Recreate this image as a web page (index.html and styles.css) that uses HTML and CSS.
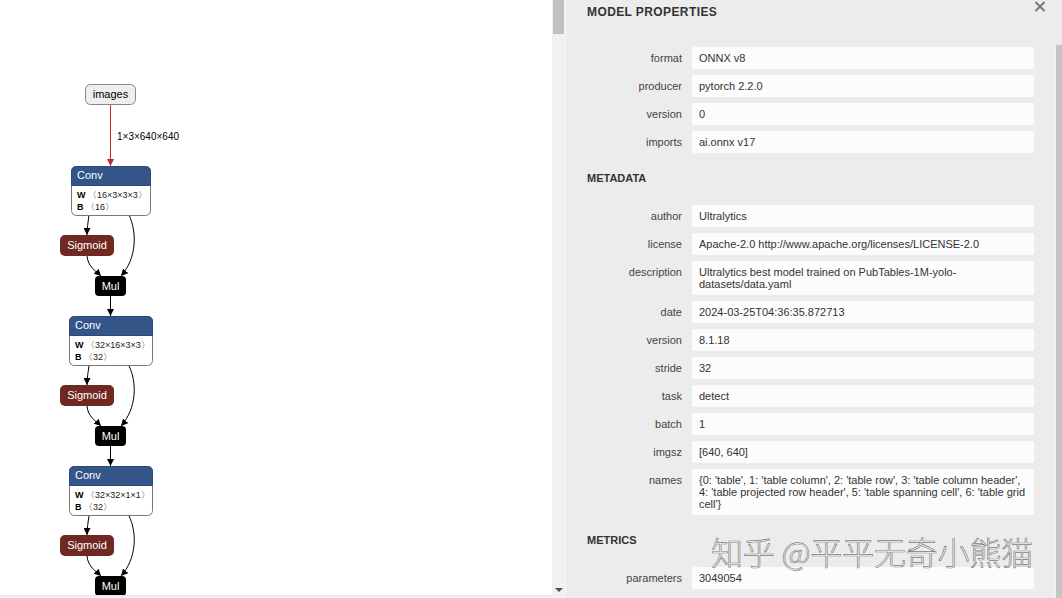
FILE: index.html
```html
<!DOCTYPE html>
<html>
<head>
<meta charset="utf-8">
<link rel="stylesheet" href="styles.css">
</head>
<body>
<div class="app">
  <main class="canvas">
    <svg class="graph" width="552" height="598" viewBox="0 0 552 598" xmlns="http://www.w3.org/2000/svg">
      <defs>
        <marker id="arrow" viewBox="0 0 8 8" refX="8" refY="4" markerWidth="7" markerHeight="7" markerUnits="userSpaceOnUse" orient="auto">
          <path d="M0,0 L8,4 L0,8 Z" fill="#000"/>
        </marker>
        <marker id="arrow-red" viewBox="0 0 8 8" refX="8" refY="4" markerWidth="7" markerHeight="7" markerUnits="userSpaceOnUse" orient="auto">
          <path d="M0,0 L8,4 L0,8 Z" fill="#c0282a"/>
        </marker>
      </defs>

      <!-- input -->
      <rect x="85.5" y="84.5" width="50" height="20" rx="5" class="input-node"/>
      <text x="110.5" y="98" class="node-title dark" text-anchor="middle">images</text>
      <path d="M110.5,105 L110.5,166" class="edge-red" marker-end="url(#arrow-red)"/>
      <text x="117" y="140" class="edge-label">1×3×640×640</text>

      <!-- block 1 -->
      <g>
        <path d="M89,215 C88,223 87,228 87,235" class="edge" marker-end="url(#arrow)"/>
        <path d="M129,215 C137,232 137,258 121,276" class="edge" marker-end="url(#arrow)"/>
        <path d="M87,256 C88,267 96,271 101,276" class="edge" marker-end="url(#arrow)"/>
        <path d="M110.5,296 L110.5,316" class="edge" marker-end="url(#arrow)"/>
        <rect x="71.5" y="166.5" width="79" height="49" rx="5" class="node-body"/>
        <path d="M71.5,185.5 L71.5,171.5 Q71.5,166.5 76.5,166.5 L145.5,166.5 Q150.5,166.5 150.5,171.5 L150.5,185.5 Z" class="layer-head"/>
        <text x="77" y="179" class="node-title">Conv</text>
        <text x="77" y="198" class="attr"><tspan class="attr-name">W</tspan> 〈16×3×3×3〉</text>
        <text x="77" y="210" class="attr"><tspan class="attr-name">B</tspan> 〈16〉</text>
        <rect x="60" y="235" width="54" height="21" rx="5" class="act-node"/>
        <text x="87" y="249" class="node-title" text-anchor="middle">Sigmoid</text>
        <rect x="95" y="276" width="31" height="20" rx="4" class="op-node"/>
        <text x="110.5" y="289.5" class="node-title" text-anchor="middle">Mul</text>
      </g>

      <!-- block 2 -->
      <g>
        <path d="M89,366 C88,373 87,378 87,385" class="edge" marker-end="url(#arrow)"/>
        <path d="M129,366 C137,382 137,408 121,426" class="edge" marker-end="url(#arrow)"/>
        <path d="M87,406 C88,417 96,421 101,426" class="edge" marker-end="url(#arrow)"/>
        <path d="M110.5,446 L110.5,466" class="edge" marker-end="url(#arrow)"/>
        <rect x="69.5" y="316.5" width="83" height="49" rx="5" class="node-body"/>
        <path d="M69.5,335.5 L69.5,321.5 Q69.5,316.5 74.5,316.5 L147.5,316.5 Q152.5,316.5 152.5,321.5 L152.5,335.5 Z" class="layer-head"/>
        <text x="75" y="329" class="node-title">Conv</text>
        <text x="75" y="348" class="attr"><tspan class="attr-name">W</tspan> 〈32×16×3×3〉</text>
        <text x="75" y="360" class="attr"><tspan class="attr-name">B</tspan> 〈32〉</text>
        <rect x="60" y="385" width="54" height="21" rx="5" class="act-node"/>
        <text x="87" y="399" class="node-title" text-anchor="middle">Sigmoid</text>
        <rect x="95" y="426" width="31" height="20" rx="4" class="op-node"/>
        <text x="110.5" y="439.5" class="node-title" text-anchor="middle">Mul</text>
      </g>

      <!-- block 3 -->
      <g>
        <path d="M89,516 C88,523 87,528 87,535" class="edge" marker-end="url(#arrow)"/>
        <path d="M129,516 C137,532 137,558 121,576" class="edge" marker-end="url(#arrow)"/>
        <path d="M87,556 C88,567 96,571 101,576" class="edge" marker-end="url(#arrow)"/>
        <rect x="69.5" y="466.5" width="83" height="49" rx="5" class="node-body"/>
        <path d="M69.5,485.5 L69.5,471.5 Q69.5,466.5 74.5,466.5 L147.5,466.5 Q152.5,466.5 152.5,471.5 L152.5,485.5 Z" class="layer-head"/>
        <text x="75" y="479" class="node-title">Conv</text>
        <text x="75" y="498" class="attr"><tspan class="attr-name">W</tspan> 〈32×32×1×1〉</text>
        <text x="75" y="510" class="attr"><tspan class="attr-name">B</tspan> 〈32〉</text>
        <rect x="60" y="535" width="54" height="21" rx="5" class="act-node"/>
        <text x="87" y="549" class="node-title" text-anchor="middle">Sigmoid</text>
        <rect x="95" y="576" width="31" height="20" rx="4" class="op-node"/>
        <text x="110.5" y="589.5" class="node-title" text-anchor="middle">Mul</text>
      </g>
    </svg>
    <div class="hscroll-line"></div>
  </main>

  <div class="vscroll-left">
    <div class="thumb-left"></div>
    <div class="arrow-down"></div>
  </div>

  <aside class="sidebar">
    <header class="sidebar-header">
      <span class="sidebar-title">MODEL PROPERTIES</span>
      <svg class="close" width="12" height="11" viewBox="0 0 12 11"><path d="M1.5,1 L10.5,10 M10.5,1 L1.5,10" stroke="#777" stroke-width="2"/></svg>
    </header>
    <div class="sidebar-body">
      <div class="content">
        <div class="row"><div class="label">format</div><div class="value">ONNX v8</div></div>
        <div class="row"><div class="label">producer</div><div class="value">pytorch 2.2.0</div></div>
        <div class="row"><div class="label">version</div><div class="value">0</div></div>
        <div class="row"><div class="label">imports</div><div class="value">ai.onnx v17</div></div>

        <div class="section-title">METADATA</div>
        <div class="row"><div class="label">author</div><div class="value">Ultralytics</div></div>
        <div class="row"><div class="label">license</div><div class="value">Apache-2.0 http://www.apache.org/licenses/LICENSE-2.0</div></div>
        <div class="row"><div class="label">description</div><div class="value">Ultralytics best model trained on PubTables-1M-yolo-datasets/data.yaml</div></div>
        <div class="row"><div class="label">date</div><div class="value">2024-03-25T04:36:35.872713</div></div>
        <div class="row"><div class="label">version</div><div class="value">8.1.18</div></div>
        <div class="row"><div class="label">stride</div><div class="value">32</div></div>
        <div class="row"><div class="label">task</div><div class="value">detect</div></div>
        <div class="row"><div class="label">batch</div><div class="value">1</div></div>
        <div class="row"><div class="label">imgsz</div><div class="value">[640, 640]</div></div>
        <div class="row"><div class="label">names</div><div class="value">{0: 'table', 1: 'table column', 2: 'table row', 3: 'table column header', 4: 'table projected row header', 5: 'table spanning cell', 6: 'table grid cell'}</div></div>

        <div class="section-title">METRICS</div>
        <div class="row"><div class="label">parameters</div><div class="value">3049054</div></div>
      </div>
      <div class="vscroll-right"><div class="thumb-right"></div></div>
    </div>
    <div class="watermark">知乎 @平平无奇小熊猫</div>
  </aside>
</div>
</body>
</html>
```

FILE: styles.css
```css
html, body {
  margin: 0;
  padding: 0;
  width: 1062px;
  height: 598px;
  overflow: hidden;
  background: #fff;
  font-family: "Liberation Sans", Arial, sans-serif;
}

.app {
  display: flex;
  width: 1062px;
  height: 598px;
}

.canvas {
  position: relative;
  flex: 0 0 552px;
  height: 598px;
  background: #fff;
}

.graph {
  display: block;
  font-family: "Liberation Sans", Arial, sans-serif;
}

.hscroll-line {
  position: absolute;
  left: 0;
  right: 0;
  bottom: 0;
  height: 2px;
  background: #f0f0f0;
  border-top: 1px solid #e2e2e2;
}

.input-node { fill: #eeeeee; stroke: #888; stroke-width: 1; }
.node-body { fill: #fff; stroke: #777; stroke-width: 1; }
.layer-head { fill: #335588; stroke: #2c4a78; stroke-width: 1; }
.act-node { fill: #702921; }
.op-node { fill: #000; }

.node-title { font-size: 11px; fill: #fff; }
.node-title.dark { fill: #000; }
.attr { font-size: 9px; fill: #222; }
.attr-name { font-weight: bold; fill: #000; }
.edge { fill: none; stroke: #000; stroke-width: 1; }
.edge-red { fill: none; stroke: #c0282a; stroke-width: 1; }
.edge-label { font-size: 10px; fill: #000; }

.vscroll-left {
  position: relative;
  flex: 0 0 13px;
  height: 598px;
  background: #f1f1f1;
  border-right: 1px solid #f6f6f6;
}

.thumb-left {
  margin: 0 1px;
  height: 34px;
  background: #c1c1c1;
}

.arrow-down {
  position: absolute;
  left: 3px;
  bottom: 6px;
  width: 0;
  height: 0;
  border-left: 4px solid transparent;
  border-right: 4px solid transparent;
  border-top: 4px solid #505050;
}

.sidebar {
  position: relative;
  flex: 1;
  display: flex;
  flex-direction: column;
  background: #ececec;
  min-width: 0;
}

.sidebar-header {
  display: flex;
  justify-content: space-between;
  align-items: flex-start;
  height: 45px;
  padding-left: 21px;
  padding-right: 16px;
}

.sidebar-title {
  padding-top: 5px;
  font-size: 12px;
  line-height: 14px;
  font-weight: bold;
  letter-spacing: 0.4px;
  color: #333;
}

.close {
  margin-top: 1px;
}

.sidebar-body {
  flex: 1;
  display: flex;
  min-height: 0;
}

.content {
  flex: 1;
  padding: 2px 20px 0 21px;
}

.row {
  display: flex;
  margin-bottom: 6px;
  font-size: 11px;
  line-height: 12px;
}

.label {
  flex: 0 0 95px;
  padding-top: 5px;
  box-sizing: border-box;
  text-align: right;
  color: #444;
  margin-right: 10px;
}

.value {
  flex: 1;
  min-width: 0;
  padding: 5px 7px;
  background: #fcfcfc;
  border-radius: 2px;
  color: #333;
}

.section-title {
  padding-top: 12px;
  margin-bottom: 20px;
  font-size: 11px;
  line-height: 14px;
  font-weight: bold;
  color: #333;
}

.vscroll-right {
  flex: 0 0 8px;
  background: #f0f0f0;
}

.thumb-right {
  margin-left: 2px;
  height: 100%;
  background: #c4c4c4;
}

.watermark {
  position: absolute;
  left: 145px;
  top: 531px;
  font-family: "Noto Sans CJK SC", sans-serif;
  font-size: 32px;
  line-height: 40px;
  letter-spacing: -0.2px;
  white-space: nowrap;
  color: rgba(255, 255, 255, 0.92);
  -webkit-text-stroke: 0.7px rgba(80, 80, 80, 0.75);
  font-weight: 300;
}
```
